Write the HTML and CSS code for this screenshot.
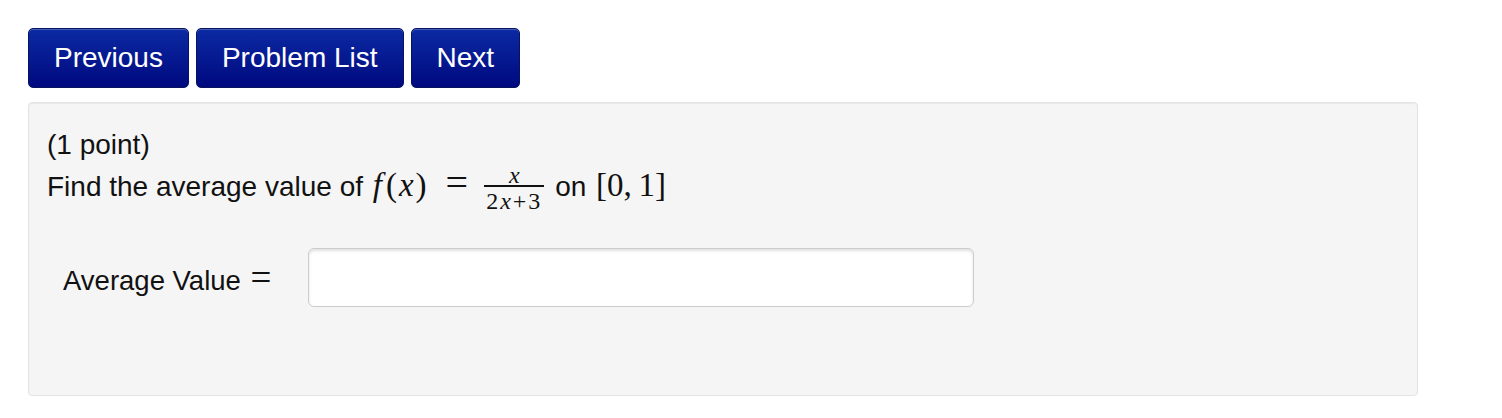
FILE: index.html
```html
<!DOCTYPE html>
<html>
    <head>
        <title>Problem</title>
        <meta charset="UTF-8">
        <meta name="viewport" content="width=device-width, initial-scale=1.0">
        <link rel="stylesheet" href="styles.css">
    </head>
    <body>
        <div class="container">
            <div class="nav-botones">
                <a href="#" class="btn-nav">Previous</a>
                <a href="#" class="btn-nav">Problem List</a>
                <a href="#" class="btn-nav">Next</a>
            </div>

            <div class="well">
                <div class="problema">
                    <div>(1 point)</div>
                    <div class="enunciado">
                        Find the average value of
                        <span class="math"><i class="fn">f</i>(<i class="var">x</i>)<span class="igual">=</span><span class="frac"><span class="num"><i>x</i></span><span class="den">2<i>x</i>+3</span></span></span>
                        on <span class="math intervalo">[0,&thinsp;1]</span>
                    </div>
                </div>

                <div class="respuesta">
                    <label for="ans" class="etiqueta">Average Value <span class="igual-lbl">=</span></label>
                    <input type="text" id="ans" name="ans" class="campo">
                </div>
            </div>
        </div>
    </body>
</html>
```

FILE: styles.css
```css
body{
    margin: 0;
    font-family: "Liberation Sans", Helvetica, Arial, sans-serif;
    color: #111;
    background: #fff;
}
.container{
    padding: 28px 0 0 28px;
    width: 1390px;
}
.nav-botones{
    display: flex;
    gap: 7px;
}
.btn-nav{
    display: flex;
    align-items: center;
    justify-content: center;
    height: 58px;
    padding: 0 25px;
    font-size: 28px;
    color: #fff;
    text-decoration: none;
    background: linear-gradient(#0b2aa3, #00097f);
    border: 1px solid #07135e;
    border-radius: 5px;
    box-shadow: inset 0 1px 0 rgba(255,255,255,0.25);
}
.well{
    margin-top: 14px;
    background: #f5f5f5;
    border: 1px solid #e3e3e3;
    border-radius: 4px;
    box-shadow: inset 0 1px 1px rgba(0,0,0,0.05);
    padding: 23px 18px 88px 18px;
}
.problema{
    font-size: 28px;
    line-height: 38px;
}
.enunciado{
    height: 38px;
}
.math{
    font-family: "Liberation Serif", "Times New Roman", serif;
    font-size: 33px;
    line-height: 38px;
}
.math i{
    font-style: italic;
}
.fn{
    margin: 0 4px 0 2px;
}
.var{
    margin: 0 2px;
}
.igual{
    font-size: 40px;
    margin: 0 16px 0 19px;
}
.frac{
    display: inline-flex;
    flex-direction: column;
    align-items: center;
    vertical-align: 13px;
    font-size: 24px;
    line-height: 20px;
    margin-right: 3px;
}
.num{
    align-self: stretch;
    text-align: center;
    border-bottom: 2px solid #111;
}
.den{
    padding: 4px 2px 0 2px;
    letter-spacing: 2px;
}
.intervalo{
    margin-left: 2px;
}
.respuesta{
    display: flex;
    align-items: center;
    margin-top: 46px;
    padding-left: 16px;
}
.etiqueta{
    font-size: 27.5px;
    width: 245px;
}
.igual-lbl{
    font-family: "Liberation Serif", serif;
    font-size: 37px;
    margin-left: 2px;
}
.campo{
    width: 666px;
    height: 59px;
    box-sizing: border-box;
    border: 1px solid #ccc;
    border-radius: 6px;
    background: #fff;
    box-shadow: inset 0 2px 3px rgba(0,0,0,0.12);
    font-size: 22px;
    padding: 0 10px;
}
```
